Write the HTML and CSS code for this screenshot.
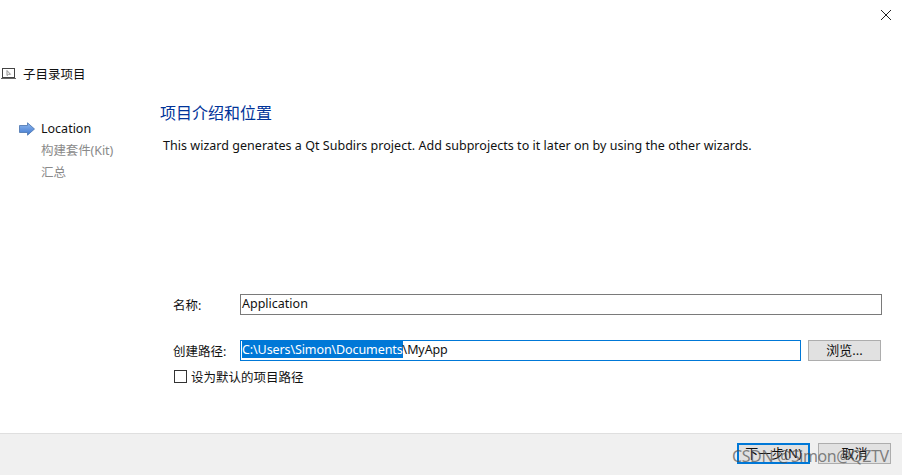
FILE: index.html
```
<!DOCTYPE html>
<html lang="zh">
<head>
<meta charset="utf-8">
<title>子目录项目</title>
<link rel="stylesheet" href="styles.css">
</head>
<body>
<div class="dialog">
  <div class="titlebar">
    <svg class="close" width="12" height="12" viewBox="0 0 12 12"><path d="M1 1L11 11M11 1L1 11" stroke="#222" stroke-width="1" fill="none"/></svg>
  </div>
  <div class="header">
    <svg class="app-icon" width="15" height="12" viewBox="0 0 15 12"><rect x="1.5" y="0.5" width="12" height="9" fill="#fff" stroke="#444"/><path d="M0 10.5H15" stroke="#666"/><path d="M6 2.5V7.5L7.5 6.3L9.5 6.3Z" fill="#fff" stroke="#777" stroke-width=".8"/></svg>
    <span>子目录项目</span>
  </div>
  <div class="body">
    <nav class="steps">
      <div class="step current">
        <svg class="arrow" width="16" height="14" viewBox="0 0 16 14"><defs><linearGradient id="g" x1="0" y1="0" x2="0" y2="1"><stop offset="0" stop-color="#8fb8ee"/><stop offset="1" stop-color="#3f78d0"/></linearGradient></defs><path d="M0.5 3.5H8.5V0.8L15.5 7L8.5 13.2V10.5H0.5Z" fill="url(#g)" stroke="#4a74ad" stroke-width=".8"/></svg>
        <span>Location</span>
      </div>
      <div class="step">构建套件(Kit)</div>
      <div class="step">汇总</div>
    </nav>
    <main class="content">
      <h1>项目介绍和位置</h1>
      <p class="intro">This wizard generates a Qt Subdirs project. Add subprojects to it later on by using the other wizards.</p>
      <div class="form">
        <div class="row name-row">
          <label>名称:</label>
          <div class="input">Application</div>
        </div>
        <div class="row path-row">
          <label>创建路径:</label>
          <div class="input focused"><span class="sel">C:\Users\Simon\Documents</span>\MyApp</div>
          <button class="btn browse" type="button">浏览...</button>
        </div>
        <div class="check-row">
          <span class="box"></span>
          <span>设为默认的项目路径</span>
        </div>
      </div>
    </main>
  </div>
  <footer class="footer">
    <button class="btn primary" type="button">下一步(N)</button>
    <button class="btn" type="button">取消</button>
  </footer>
  <div class="watermark">CSDN @Simon@QZTV</div>
</div>
</body>
</html>
```
FILE: styles.css
```
* { box-sizing: border-box; }
html, body { margin: 0; padding: 0; }
body {
  width: 902px;
  height: 475px;
  background: #fff;
  overflow: hidden;
  font-family: "Noto Sans", "Noto Sans CJK SC", sans-serif;
  font-size: 12.5px;
  color: #111;
}
.dialog {
  position: relative;
  width: 902px;
  height: 475px;
  display: flex;
  flex-direction: column;
}
.titlebar {
  height: 64px;
  display: flex;
  justify-content: flex-end;
  padding: 9px 10px 0 0;
}
.close { display: block; }
.header {
  height: 19px;
  display: flex;
  align-items: center;
  gap: 7px;
  padding-left: 1px;
}
.app-icon { display: block; }
.body {
  flex: 1;
  display: flex;
  min-height: 0;
}
.steps {
  width: 160px;
  padding: 35px 0 0 19px;
}
.step {
  height: 22px;
  line-height: 22px;
  padding-left: 22px;
  color: #8a8a8a;
  letter-spacing: -.1px;
}
.step.current {
  display: flex;
  align-items: center;
  gap: 6px;
  padding-left: 0;
  color: #111;
  letter-spacing: 0;
}
.arrow { display: block; }
.content {
  flex: 1;
  min-width: 0;
  display: flex;
  flex-direction: column;
}
h1 {
  margin: 0;
  padding-top: 18px;
  height: 45px;
  font-size: 16px;
  line-height: 24px;
  font-weight: 400;
  color: #003399;
}
.intro {
  margin: 0;
  padding: 8px 0 0 3px;
  line-height: 20px;
  height: 40px;
  letter-spacing: .03px;
}
.form {
  padding: 126px 20px 0 13px;
}
.row {
  display: flex;
  align-items: center;
}
.row label {
  width: 67px;
  flex: none;
}
.input {
  flex: 1;
  height: 21px;
  line-height: 18px;
  border: 1px solid #7a7a7a;
  padding-left: 1px;
  white-space: nowrap;
  background: #fff;
}
.name-row { height: 21px; }
.path-row { height: 21px; margin-top: 25px; }
.input.focused {
  border-color: #0078d7;
  padding-left: 1px;
  letter-spacing: -.1px;
}
.sel {
  background: #0078d7;
  color: #fff;
  display: inline-block;
  height: 17px;
  line-height: 18px;
}
.btn {
  height: 21px;
  padding: 0;
  border: 1px solid #adadad;
  background: #e1e1e1;
  font: inherit;
  font-size: 13px;
  line-height: 17px;
  color: #111;
}
.browse {
  width: 73px;
  margin-left: 7px;
  margin-right: 1px;
  flex: none;
}
.check-row {
  display: flex;
  align-items: center;
  gap: 4px;
  margin-top: 6px;
  height: 18px;
  padding-left: 1px;
}
.box {
  width: 13px;
  height: 13px;
  border: 1px solid #333;
  background: #fff;
  flex: none;
}
.footer {
  height: 42px;
  flex: none;
  background: #f0f0f0;
  border-top: 1px solid #dfdfdf;
  display: flex;
  justify-content: flex-end;
  align-items: flex-start;
  gap: 8px;
  padding: 9px 11px 0 0;
}
.footer .btn { width: 73px; height: 21px; }
.footer .primary {
  border: 2px solid #0078d7;
  line-height: 15px;
}
.watermark {
  position: absolute;
  left: 732px;
  top: 446px;
  font-size: 16px;
  line-height: 20px;
  white-space: nowrap;
  color: rgba(80, 80, 80, .7);
  letter-spacing: -.4px;
}
```
